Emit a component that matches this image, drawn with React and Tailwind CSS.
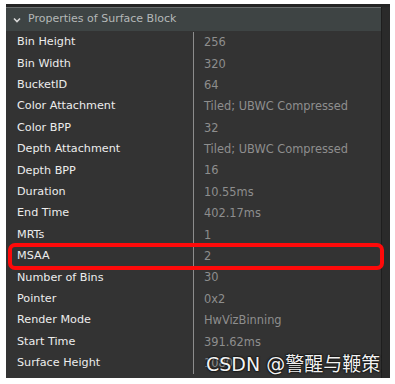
import React from 'react';

const rows = [
  ['Bin Height', '256'],
  ['Bin Width', '320'],
  ['BucketID', '64'],
  ['Color Attachment', 'Tiled; UBWC Compressed'],
  ['Color BPP', '32'],
  ['Depth Attachment', 'Tiled; UBWC Compressed'],
  ['Depth BPP', '16'],
  ['Duration', '10.55ms'],
  ['End Time', '402.17ms'],
  ['MRTs', '1'],
  ['MSAA', '2'],
  ['Number of Bins', '30'],
  ['Pointer', '0x2'],
  ['Render Mode', 'HwVizBinning'],
  ['Start Time', '391.62ms'],
  ['Surface Height', '1080'],
];

const App = () => {
  return (
    <div
      className="w-[395px] h-[384px] bg-white pt-[4px] pl-[6px] overflow-hidden"
      style={{ fontFamily: '"DejaVu Sans", "Noto Sans", sans-serif' }}
    >
      <div className="relative w-[384px] h-[374px] bg-[#2b2b2b] border-t-[3px] border-[#242424] flex">
        <div className="flex-1 flex flex-col bg-[#333333]">
          {/* header */}
          <div className="h-[24px] bg-[#3e4444] border-t border-[#6a6e6e] flex items-center pl-[7px] gap-[7px] text-[11px] text-[#b4b8b8]">
            <svg width="8" height="6" viewBox="0 0 8 6">
              <path d="M1 1.5 L4 4.5 L7 1.5" stroke="#d8d8d8" strokeWidth="1.6" fill="none" />
            </svg>
            <span>Properties of Surface Block</span>
          </div>
          {/* rows */}
          <div className="flex flex-col pt-[1px]">
            {rows.map(([k, v]) => (
              <div key={k} className="h-[21.4px] flex items-center">
                <div className="w-[188px] pl-[11px] text-[11.2px] text-[#ededed] border-r border-[#8c8c8c] h-full flex items-center">
                  {k}
                </div>
                <div className="pl-[10px] text-[11.4px] text-[#8e8e8e]">{v}</div>
              </div>
            ))}
          </div>
        </div>
        <div className="w-[9px] bg-[#2a2a2a] border-l border-[#1e1e1e]" />

        {/* highlight */}
        <div className="absolute left-[2px] top-[236px] w-[376px] h-[27px] rounded-[7px] border-[4px] border-[#ff0a0a]" />

        {/* watermark */}
        <div
          className="absolute left-[200px] top-[343px] text-[19px] text-[#f2f2f2]"
          style={{
            fontFamily: '"DejaVu Sans", "Noto Sans CJK SC", sans-serif',
            textShadow: '0 0 2px #000, 0 0 2px #000',
          }}
        >
          CSDN @警醒与鞭策
        </div>
      </div>
    </div>
  );
};

export default App;
